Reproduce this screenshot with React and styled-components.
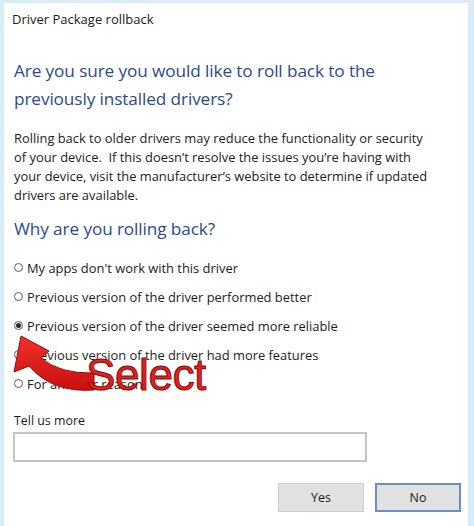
import React from "react";
import styled, { createGlobalStyle } from "styled-components";

const Global = createGlobalStyle`
  html, body { margin: 0; padding: 0; }
  body {
    width: 474px;
    height: 526px;
    overflow: hidden;
    background: #d8edf8;
    font-family: "Open Sans", "Noto Sans", sans-serif;
  }
`;

const Frame = styled.div`
  position: relative;
  box-sizing: border-box;
  width: 474px;
  height: 526px;
  padding: 3px 6px 0 4px;
`;

const Dialog = styled.div`
  box-sizing: border-box;
  height: 100%;
  background: #ffffff;
  padding: 0 0 0 10px;
  display: flex;
  flex-direction: column;
  color: #1c1c1c;
`;

const Caption = styled.div`
  font-size: 13px;
  line-height: 18px;
  margin-top: 7px;
  margin-left: -2px;
  color: #202020;
`;

const Instruction = styled.h1`
  margin: 29px 0 0 0;
  font-weight: 400;
  font-size: 17.2px;
  line-height: 28px;
  color: #2b4a8d;
  letter-spacing: -0.1px;
`;

const Body = styled.p`
  margin: 16px 0 0 0;
  width: 414px;
  font-size: 12.9px;
  line-height: 19px;
  color: #1c1c1c;
`;

const SubHeading = styled.h2`
  margin: 12px 0 0 0;
  font-weight: 400;
  font-size: 17.2px;
  line-height: 24px;
  color: #2b4a8d;
  letter-spacing: -0.1px;
`;

const RadioList = styled.div`
  margin-top: 12px;
  display: flex;
  flex-direction: column;
`;

const RadioRow = styled.label`
  display: flex;
  align-items: center;
  height: 29px;
  font-size: 12.9px;
  color: #1c1c1c;
`;

const Circle = styled.span`
  box-sizing: border-box;
  width: 9px;
  height: 9px;
  border-radius: 50%;
  border: 1px solid #5a5a5a;
  background: #fff;
  margin-right: 4px;
  display: flex;
  align-items: center;
  justify-content: center;
  flex: none;
  &::after {
    content: "";
    display: ${(p) => (p.$checked ? "block" : "none")};
    width: 5px;
    height: 5px;
    border-radius: 50%;
    background: #2a2a2a;
  }
`;

const FieldLabel = styled.div`
  margin-top: 15px;
  font-size: 12.4px;
  line-height: 16px;
  color: #1c1c1c;
`;

const TextBox = styled.div`
  box-sizing: border-box;
  margin-top: 3px;
  margin-left: -1px;
  width: 354px;
  height: 30px;
  border: 2px solid #c4c4c4;
  background: #fff;
`;

const ButtonBar = styled.div`
  margin-top: 21px;
  padding-right: 7px;
  display: flex;
  justify-content: flex-end;
  gap: 11px;
`;

const Button = styled.div`
  box-sizing: border-box;
  width: 86px;
  height: 29px;
  display: flex;
  align-items: center;
  justify-content: center;
  background: #e1e1e1;
  border: ${(p) => (p.$default ? "2px solid #6b8fc4" : "1px solid #d0d0d0")};
  font-size: 12.4px;
  color: #1c1c1c;
`;

const Annotation = styled.svg`
  position: absolute;
  left: 0;
  top: 0;
  width: 474px;
  height: 526px;
  pointer-events: none;
`;

const Callout = styled.div`
  position: absolute;
  left: 86px;
  top: 349px;
  font-family: "Liberation Sans", Arial, sans-serif;
  font-size: 44px;
  line-height: 52px;
  font-weight: 400;
  color: #e2201c;
  -webkit-text-stroke: 1px #8c0a0a;
  letter-spacing: -0.4px;
  pointer-events: none;
`;

const reasons = [
  "My apps don't work with this driver",
  "Previous version of the driver performed better",
  "Previous version of the driver seemed more reliable",
  "Previous version of the driver had more features",
  "For another reason",
];

export default function App() {
  return (
    <>
      <Global />
      <Frame>
        <Dialog>
          <Caption>Driver Package rollback</Caption>
          <Instruction>
            Are you sure you would like to roll back to the
            <br />
            previously installed drivers?
          </Instruction>
          <Body>
            Rolling back to older drivers may reduce the functionality or security
            of your device.&nbsp; If this doesn’t resolve the issues you’re having with
            your device, visit the manufacturer’s website to determine if updated
            drivers are available.
          </Body>
          <SubHeading>Why are you rolling back?</SubHeading>
          <RadioList>
            {reasons.map((r, i) => (
              <RadioRow key={r}>
                <Circle $checked={i === 2} />
                {r}
              </RadioRow>
            ))}
          </RadioList>
          <FieldLabel>Tell us more</FieldLabel>
          <TextBox />
          <ButtonBar>
            <Button>Yes</Button>
            <Button $default>No</Button>
          </ButtonBar>
        </Dialog>
        <Annotation viewBox="0 0 474 526">
          <defs>
            <linearGradient id="redg" x1="0" y1="0" x2="0" y2="1">
              <stop offset="0" stopColor="#f0322a" />
              <stop offset="1" stopColor="#c8100e" />
            </linearGradient>
          </defs>
          <path
            d="M21 336 L49 351 L41 358 Q60 374 94 373 L94 390 Q52 393 29 366 L14 372 Z"
            fill="url(#redg)"
            stroke="#9a0b0b"
            strokeWidth="1"
            strokeLinejoin="round"
          />
        </Annotation>
        <Callout>Select</Callout>
      </Frame>
    </>
  );
}
